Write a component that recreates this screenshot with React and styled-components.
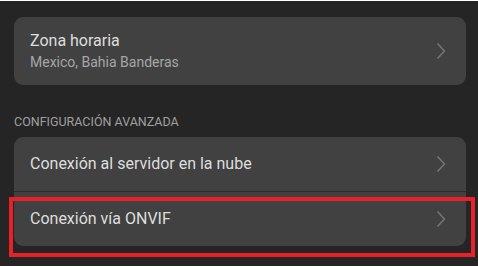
import React from "react";
import styled, { createGlobalStyle } from "styled-components";

const GlobalStyle = createGlobalStyle`
  html, body {
    margin: 0;
    padding: 0;
    background: #252525;
  }
  body {
    font-family: Roboto, "Noto Sans", sans-serif;
    border-top: 1px solid #ffffff;
  }
`;

const Page = styled.div`
  width: 478px;
  height: 265px;
  box-sizing: border-box;
  padding: 16px 12px 0 14px;
  display: flex;
  flex-direction: column;
`;

const Card = styled.div`
  position: relative;
  background: #414141;
  border-radius: 9px;
  display: flex;
  flex-direction: column;
`;

const Row = styled.div`
  position: relative;
  height: ${({ $tall }) => ($tall ? "68px" : "54px")};
  display: flex;
  align-items: center;
  justify-content: space-between;
  padding: 0 20px 0 16px;
  border-top: ${({ $divider }) => ($divider ? "1px solid #2b2b2b" : "none")};
`;

const Texts = styled.div`
  display: flex;
  flex-direction: column;
  gap: 2px;
`;

const Title = styled.div`
  color: #dedede;
  font-size: 16px;
  line-height: 20px;
`;

const Subtitle = styled.div`
  color: #a6a6a6;
  font-size: 14px;
  line-height: 18px;
`;

const SectionTitle = styled.div`
  margin: 29px 0 7px;
  color: #a0a0a0;
  font-size: 12.5px;
  line-height: 16px;
`;

const Highlight = styled.div`
  position: absolute;
  left: -5px;
  right: -9px;
  top: 5px;
  bottom: -11px;
  border: 4px solid #e8202a;
  pointer-events: none;
`;

const Chevron = () => (
  <svg width="10" height="18" viewBox="0 0 10 18">
    <path d="M1.5 1.5 L8.5 9 L1.5 16.5" fill="none" stroke="#767676" strokeWidth="1.5" />
  </svg>
);

export default function App() {
  return (
    <Page>
      <GlobalStyle />
      <Card>
        <Row $tall>
          <Texts>
            <Title>Zona horaria</Title>
            <Subtitle>Mexico, Bahia Banderas</Subtitle>
          </Texts>
          <Chevron />
        </Row>
      </Card>
      <SectionTitle>CONFIGURACIÓN AVANZADA</SectionTitle>
      <Card>
        <Row>
          <Title>Conexión al servidor en la nube</Title>
          <Chevron />
        </Row>
        <Row $divider>
          <Title>Conexión vía ONVIF</Title>
          <Chevron />
          <Highlight />
        </Row>
      </Card>
    </Page>
  );
}
